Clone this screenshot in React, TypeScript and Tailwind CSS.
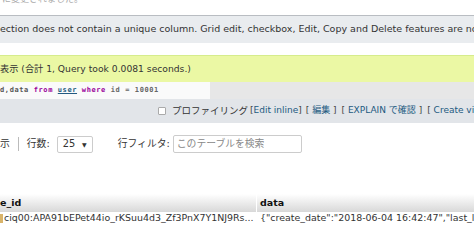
import React from "react";

const link = "text-[#235a81]";

export default function App() {
  return (
    <div className="w-[474px] h-[248px] overflow-hidden bg-white text-[#444] text-[9px] font-['DejaVu_Sans','Noto_Sans_CJK_JP',sans-serif] whitespace-nowrap">
      {/* clipped line above */}
      <div className="h-[15px] overflow-hidden">
        <div className="-mt-[7px] text-[#aaa] pl-[2px]">に変更されました。</div>
      </div>

      {/* notice */}
      <div className="h-[28px] border-t border-[#b9bdc2] bg-[#e9ecef] flex items-center overflow-hidden">
        <span className="text-[#333] text-[9.5px]">ection does not contain a unique column. Grid edit, checkbox, Edit, Copy and Delete features are not available.</span>
      </div>

      <div className="h-[12px]" />

      {/* success */}
      <div className="h-[27px] border-t border-[#d6ec8c] bg-[#ebf8a4] flex items-center">
        <span className="text-[#333] text-[9.2px]">表示 (合計 1, Query took 0.0081 seconds.)</span>
      </div>

      {/* sql */}
      <div className="h-[17px] flex">
        <div className="w-[210px] bg-[#fafafa] flex items-center font-['DejaVu_Sans_Mono',monospace] text-[7px] tracking-[0.6px] font-bold">
          <span className="text-[#555]">d,data</span>
          <span className="text-[#990099]">&nbsp;from&nbsp;</span>
          <span className="text-[#235a81] underline">user</span>
          <span className="text-[#990099]">&nbsp;where&nbsp;</span>
          <span className="text-[#666]">id = 10001</span>
        </div>
        <div className="flex-1 bg-[#e7e7e7]" />
      </div>

      {/* actions */}
      <div className="h-[24px] bg-[#e2e5e9] flex items-center pl-[158px] overflow-hidden">
        <span className="shrink-0 w-[8px] h-[8px] border border-[#aaa] bg-white rounded-[1px] mr-[6px]" />
        <span className="text-[#333] text-[9.5px]">プロファイリング</span>
        <span className="ml-[2px]">[<a className={link}>Edit inline</a>]</span>
        <span className="ml-[4px]">[ <a className={link}>編集</a> ]</span>
        <span className="ml-[5px]">[ <a className={link}>EXPLAIN で確認</a> ]</span>
        <span className="ml-[5px]">[ <a className={link}>Create view</a> ]</span>
      </div>

      {/* controls */}
      <div className="h-[30px] flex items-center mt-[6px] text-[9.8px] text-[#333]">
        <span>示</span>
        <span className="w-px h-[14px] bg-[#bbb] ml-[8px] mr-[8px]" />
        <span>行数:</span>
        <div className="ml-[7px] w-[36px] h-[17px] border border-[#ccc] rounded-[2px] bg-white flex items-center justify-between px-[5px]">
          <span>25</span>
          <span className="text-[6px]">▼</span>
        </div>
        <span className="ml-[25px]">行フィルタ:</span>
        <div className="ml-[3px] w-[129px] h-[18px] border border-[#ccc] rounded-[2px] bg-white flex items-center px-[3px] text-[#888]">
          このテーブルを検索
        </div>
      </div>

      <div className="h-[35px]" />

      {/* table */}
      <div className="flex h-[18px]">
        <div className="w-[256px] bg-gradient-to-b from-white to-[#d8d8d8] flex items-center font-bold text-[#111] text-[9.5px]">e_id</div>
        <div className="w-px bg-white" />
        <div className="flex-1 bg-gradient-to-b from-white to-[#d8d8d8] flex items-center pl-[3px] font-bold text-[#111] text-[9.5px]">data</div>
      </div>
      <div className="flex h-[13px] items-center text-[#333] text-[9.45px]">
        <div className="w-[256px] shrink-0 flex items-center">
          <span className="shrink-0 w-[3px] h-[9px] bg-[#d9b46a] mr-[1px]" />
          <span>ciq00:APA91bEPet44io_rKSuu4d3_Zf3PnX7Y1NJ9Rs...</span>
        </div>
        <div className="pl-[4px]">{'{"create_date":"2018-06-04 16:42:47","last_login"}'}</div>
      </div>
    </div>
  );
}
